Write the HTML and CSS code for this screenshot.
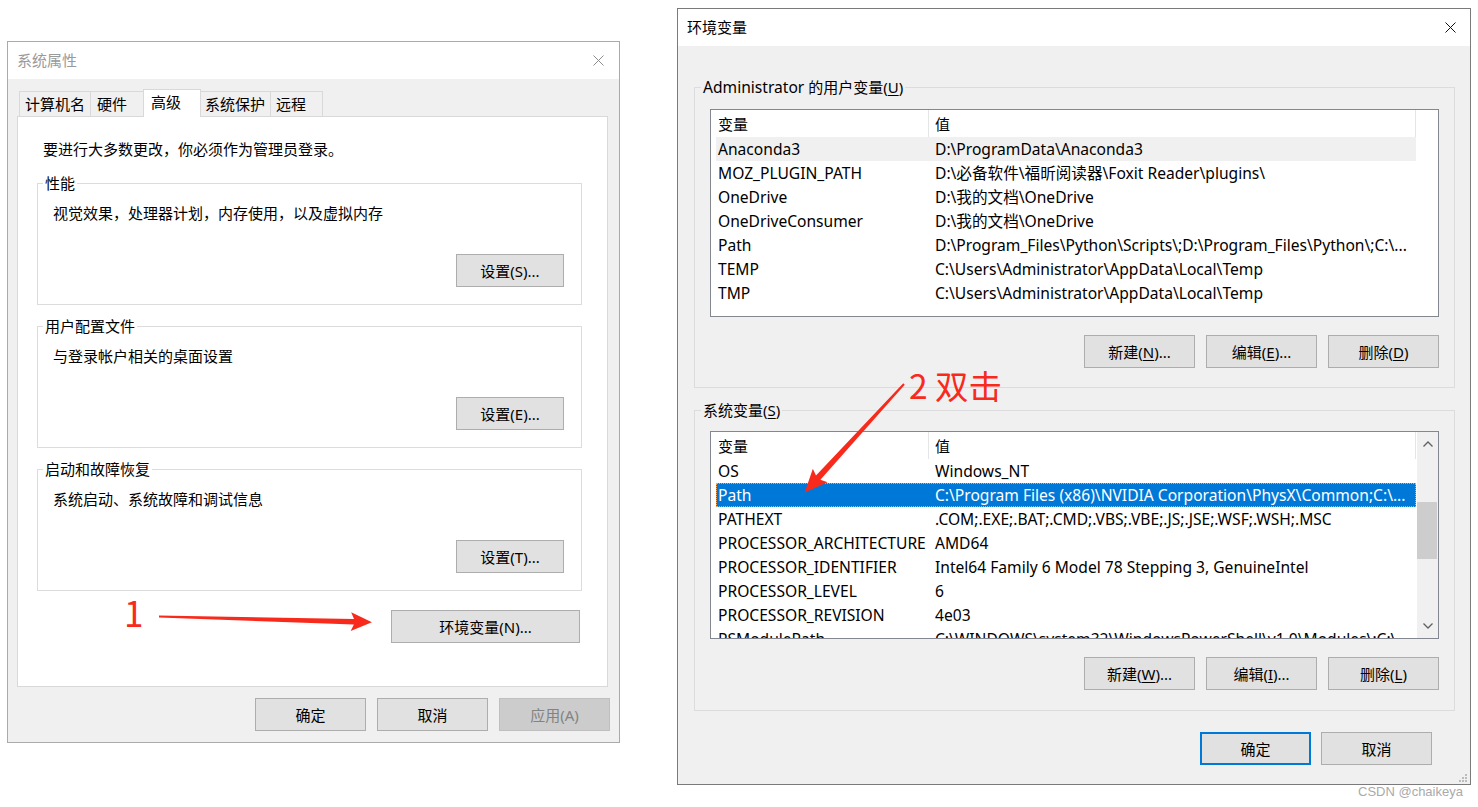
FILE: index.html
```html
<!DOCTYPE html>
<html lang="zh-CN">
<head>
<meta charset="utf-8">
<title>环境变量</title>
<link rel="stylesheet" href="styles.css">
</head>
<body>

<section class="win win-sys">
  <header class="titlebar">
    <span class="title">系统属性</span>
    <svg class="close" viewBox="0 0 11 11"><path d="M0.5 0.5L10.5 10.5M10.5 0.5L0.5 10.5"/></svg>
  </header>
  <div class="sys-body">
    <div class="tabs">
      <div class="tab t1">计算机名</div>
      <div class="tab t2">硬件</div>
      <div class="tab t3 active">高级</div>
      <div class="tab t4">系统保护</div>
      <div class="tab t5">远程</div>
    </div>
    <div class="panel">
      <p class="intro">要进行大多数更改，你必须作为管理员登录。</p>
      <fieldset class="group">
        <legend>性能</legend>
        <div class="group-body">
          <p class="desc">视觉效果，处理器计划，内存使用，以及虚拟内存</p>
          <div class="group-actions"><button class="btn btn-set">设置(S)...</button></div>
        </div>
      </fieldset>
      <fieldset class="group">
        <legend>用户配置文件</legend>
        <div class="group-body">
          <p class="desc">与登录帐户相关的桌面设置</p>
          <div class="group-actions"><button class="btn btn-set">设置(E)...</button></div>
        </div>
      </fieldset>
      <fieldset class="group">
        <legend>启动和故障恢复</legend>
        <div class="group-body">
          <p class="desc">系统启动、系统故障和调试信息</p>
          <div class="group-actions"><button class="btn btn-set">设置(T)...</button></div>
        </div>
      </fieldset>
      <div class="env-row"><button class="btn btn-env">环境变量(N)...</button></div>
    </div>
    <div class="dlg-buttons sys-buttons">
      <button class="btn">确定</button>
      <button class="btn">取消</button>
      <button class="btn disabled">应用(A)</button>
    </div>
  </div>
</section>

<section class="win win-env">
  <header class="titlebar">
    <span class="title">环境变量</span>
    <svg class="close" viewBox="0 0 11 11"><path d="M0.5 0.5L10.5 10.5M10.5 0.5L0.5 10.5"/></svg>
  </header>
  <div class="env-body">
    <fieldset class="vgroup uservars">
      <legend><span class="lat">Administrator</span> 的用户变量(<u>U</u>)</legend>
      <div class="vgroup-body">
        <div class="listbox">
          <div class="list">
            <div class="lv-head"><div class="col c1">变量</div><div class="col c2">值</div></div>
            <div class="row sel-inactive"><span>Anaconda3</span><span>D:\ProgramData\Anaconda3</span></div>
            <div class="row"><span>MOZ_PLUGIN_PATH</span><span>D:\必备软件\福昕阅读器\Foxit Reader\plugins\</span></div>
            <div class="row"><span>OneDrive</span><span>D:\我的文档\OneDrive</span></div>
            <div class="row"><span>OneDriveConsumer</span><span>D:\我的文档\OneDrive</span></div>
            <div class="row"><span>Path</span><span>D:\Program_Files\Python\Scripts\;D:\Program_Files\Python\;C:\...</span></div>
            <div class="row"><span>TEMP</span><span>C:\Users\Administrator\AppData\Local\Temp</span></div>
            <div class="row"><span>TMP</span><span>C:\Users\Administrator\AppData\Local\Temp</span></div>
          </div>
        </div>
        <div class="btn-row">
          <button class="btn">新建(<u>N</u>)...</button>
          <button class="btn">编辑(<u>E</u>)...</button>
          <button class="btn">删除(<u>D</u>)</button>
        </div>
      </div>
    </fieldset>

    <fieldset class="vgroup sysvars">
      <legend>系统变量(<u>S</u>)</legend>
      <div class="vgroup-body">
        <div class="listbox">
          <div class="list">
            <div class="lv-head"><div class="col c1">变量</div><div class="col c2">值</div></div>
            <div class="row"><span>OS</span><span>Windows_NT</span></div>
            <div class="row sel"><span>Path</span><span>C:\Program Files (x86)\NVIDIA Corporation\PhysX\Common;C:\...</span></div>
            <div class="row"><span>PATHEXT</span><span>.COM;.EXE;.BAT;.CMD;.VBS;.VBE;.JS;.JSE;.WSF;.WSH;.MSC</span></div>
            <div class="row"><span>PROCESSOR_ARCHITECTURE</span><span>AMD64</span></div>
            <div class="row"><span>PROCESSOR_IDENTIFIER</span><span>Intel64 Family 6 Model 78 Stepping 3, GenuineIntel</span></div>
            <div class="row"><span>PROCESSOR_LEVEL</span><span>6</span></div>
            <div class="row"><span>PROCESSOR_REVISION</span><span>4e03</span></div>
            <div class="row"><span>PSModulePath</span><span>C:\WINDOWS\system32\WindowsPowerShell\v1.0\Modules\;C:\...</span></div>
          </div>
          <div class="scrollbar">
            <div class="sb-btn"><svg viewBox="0 0 10 6"><polyline points="0.5,5.5 5,1 9.5,5.5"/></svg></div>
            <div class="sb-track"><div class="sb-thumb"></div></div>
            <div class="sb-btn"><svg viewBox="0 0 10 6"><polyline points="0.5,0.5 5,5 9.5,0.5"/></svg></div>
          </div>
        </div>
        <div class="btn-row">
          <button class="btn">新建(<u>W</u>)...</button>
          <button class="btn">编辑(<u>I</u>)...</button>
          <button class="btn">删除(<u>L</u>)</button>
        </div>
      </div>
    </fieldset>

    <div class="dlg-buttons env-buttons">
      <button class="btn default">确定</button>
      <button class="btn">取消</button>
    </div>
  </div>
  <svg class="grip" viewBox="0 0 10 10">
    <rect x="7" y="1" width="2" height="2"/>
    <rect x="4" y="4" width="2" height="2"/><rect x="7" y="4" width="2" height="2"/>
    <rect x="1" y="7" width="2" height="2"/><rect x="4" y="7" width="2" height="2"/><rect x="7" y="7" width="2" height="2"/>
  </svg>
</section>

<svg class="annot" viewBox="0 0 1478 807">
  <polygon transform="translate(159 616.5) rotate(1.53)" points="0,-1 195,-2.8 192,-9.5 213,0 192,9.5 195,2.8 0,1"/>
  <polygon transform="translate(904 384) rotate(132.5)" points="0,-1 127,-3 124,-10 147,0 124,10 127,3 0,1"/>
</svg>
<div class="note n1">1</div>
<div class="note n2">2 双击</div>
<div class="watermark">CSDN @chaikeya</div>

</body>
</html>
```

FILE: styles.css
```css
* { box-sizing: border-box; }

html, body { margin: 0; padding: 0; }

body {
  width: 1478px;
  height: 807px;
  overflow: hidden;
  position: relative;
  background: #fff;
  font-family: "Noto Sans", "Noto Sans CJK SC", sans-serif;
  font-size: 15px;
  line-height: 20px;
  color: #000;
}

p { margin: 0; }

.lat { font-size: 15.6px; }

/* ---------- windows ---------- */
.win {
  position: absolute;
  display: flex;
  flex-direction: column;
  background: #f0f0f0;
}

.win-sys {
  left: 7px;
  top: 41px;
  width: 613px;
  height: 702px;
  border: 1px solid #aaaaaa;
}

.win-env {
  left: 677px;
  top: 8px;
  width: 794px;
  height: 777px;
  border: 1px solid #7a7a7a;
}

.titlebar {
  flex: none;
  height: 37px;
  background: #fff;
  display: flex;
  align-items: center;
  justify-content: space-between;
  padding-left: 9px;
}

.title { margin-top: -1px; }

.close {
  width: 11px;
  height: 11px;
  fill: none;
  stroke-width: 1;
}

.win-sys .title { color: #9a9a9a; }
.win-sys .close { stroke: #8c8c8c; margin-right: 15px; }
.win-env .close { stroke: #111; margin-right: 14px; }

/* ---------- buttons ---------- */
.btn {
  width: 111px;
  height: 33px;
  padding: 0;
  margin: 0;
  font: inherit;
  line-height: 20px;
  color: #000;
  background: #e1e1e1;
  border: 1px solid #adadad;
  border-radius: 0;
}

.btn u { text-underline-offset: 2px; }

.btn.disabled {
  background: #cccccc;
  border-color: #bfbfbf;
  color: #838383;
}

.btn.default {
  border: 2px solid #0078d7;
}

.btn-set { width: 108px; }
.btn-env { width: 189px; }

/* ---------- system properties ---------- */
.sys-body {
  flex: 1;
  display: flex;
  flex-direction: column;
  padding: 10px 11px 0 9px;
}

.tabs {
  display: flex;
  align-items: flex-end;
  height: 27px;
  padding-left: 2px;
}

.tab {
  height: 25px;
  border: 1px solid #d9d9d9;
  border-bottom: none;
  background: #f0f0f0;
  padding: 2px 0 0 5px;
  white-space: nowrap;
}

.tab + .tab { margin-left: -1px; }

.t1 { width: 72px; }
.t2 { width: 54px; padding-left: 6px; }
.t3 { width: 58px; }
.t4 { width: 71px; padding-left: 4px; }
.t5 { width: 53px; }

.tab.active {
  height: 28px;
  margin-bottom: -1px;
  background: #fff;
  position: relative;
  z-index: 1;
  padding-left: 7px;
}

.panel {
  height: 571px;
  background: #fff;
  border: 1px solid #d9d9d9;
  padding: 22px 25px 0 19px;
  display: flex;
  flex-direction: column;
}

.intro { margin: 0 0 14px 6px; }

.group {
  margin: 0;
  padding: 0;
  border: 1px solid #dcdcdc;
  min-inline-size: 0;
}

.group + .group { margin-top: 11px; }

.group legend {
  padding: 0 2px;
  margin-left: 5px;
  line-height: 20px;
}

.group-body { padding: 10px 17px 17px 15px; }

.group-actions {
  display: flex;
  justify-content: flex-end;
  margin-top: 31px;
}

.env-row {
  display: flex;
  justify-content: flex-end;
  margin-top: 19px;
  padding-right: 2px;
}

.dlg-buttons {
  display: flex;
  justify-content: flex-end;
}

.sys-buttons {
  margin-top: 11px;
  margin-right: -2px;
  gap: 11px;
}

/* ---------- environment variables ---------- */
.env-body {
  flex: 1;
  display: flex;
  flex-direction: column;
  padding: 31px 15px 0 16px;
}

.vgroup {
  margin: 0;
  padding: 0;
  border: 1px solid #dcdcdc;
  min-inline-size: 0;
}

.vgroup + .vgroup { margin-top: 12px; }

.vgroup legend {
  padding: 0 2px;
  margin-left: 6px;
  line-height: 20px;
}

.vgroup legend u { text-underline-offset: 2px; }

.vgroup-body { padding: 12px 15px 19px; }
.sysvars .vgroup-body { padding-top: 11px; padding-bottom: 20px; }

.listbox {
  height: 208px;
  border: 1px solid #828790;
  background: #fff;
  display: flex;
  overflow: hidden;
}

.list {
  flex: 1;
  min-width: 0;
  overflow: hidden;
}

.lv-head {
  display: flex;
  width: 705px;
  height: 27px;
}

.lv-head .col {
  padding: 4px 0 0 7px;
  border-right: 1px solid #e5e5e5;
}

.lv-head .c1 { width: 218px; }
.lv-head .c2 { width: 487px; padding-left: 6px; }

.row {
  display: grid;
  grid-template-columns: 217px 1fr;
  width: 700px;
  margin-left: 5px;
  height: 24px;
  line-height: 25px;
  font-size: 15.6px;
  white-space: nowrap;
}

.row span {
  padding-left: 2px;
  overflow: hidden;
}

.row.sel-inactive { background: #f0f0f0; }

.row.sel {
  background: #0078d7;
  color: #fff;
  outline: 1px dotted #f7a55c;
  outline-offset: -1px;
}

.scrollbar {
  flex: none;
  width: 22px;
  background: #f0f0f0;
  display: flex;
  flex-direction: column;
  border-left: 1px solid #fff;
}

.sb-btn {
  height: 24px;
  display: flex;
  align-items: center;
  justify-content: center;
}

.sb-btn svg {
  width: 10px;
  height: 6px;
  fill: none;
  stroke: #606060;
  stroke-width: 1.3;
}

.sb-track {
  flex: 1;
  padding-top: 46px;
}

.sb-thumb {
  height: 57px;
  margin-right: 1px;
  background: #cdcdcd;
}

.btn-row {
  display: flex;
  justify-content: flex-end;
  gap: 11px;
  margin-top: 18px;
}

.env-buttons {
  margin-top: 21px;
  margin-right: 23px;
  gap: 10px;
}

.grip {
  position: absolute;
  right: 2px;
  bottom: 1px;
  width: 10px;
  height: 10px;
  fill: #bcbcbc;
}

/* ---------- annotations ---------- */
.annot {
  position: absolute;
  left: 0;
  top: 0;
  width: 1478px;
  height: 807px;
  fill: #f72a1c;
  pointer-events: none;
}

.note {
  position: absolute;
  color: #f72a1c;
  font-family: "Noto Sans CJK SC", "Noto Sans", sans-serif;
  line-height: 1;
  white-space: nowrap;
}

.n1 { left: 124px; top: 594px; font-size: 35px; }
.n2 { left: 909px; top: 368px; font-size: 33.5px; }

.watermark {
  position: absolute;
  left: 1358px;
  top: 784px;
  font-family: "Liberation Sans", Arial, sans-serif;
  font-size: 13px;
  line-height: 15px;
  color: #aaaaaa;
}
```
